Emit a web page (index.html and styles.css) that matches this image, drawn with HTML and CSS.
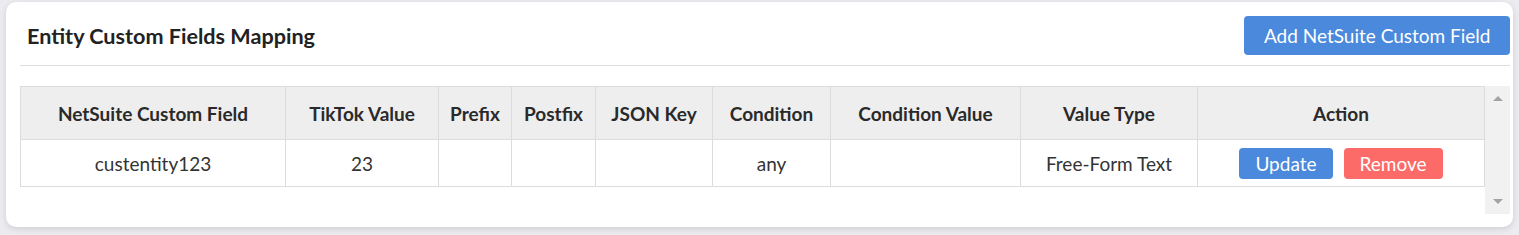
FILE: index.html
```html
<!DOCTYPE html>
<html>
<head>
<meta charset="utf-8">
<link rel="stylesheet" href="styles.css">
</head>
<body>
<div class="card">
  <div class="card-head">
    <h2 class="title">Entity Custom Fields Mapping</h2>
    <button class="btn btn-blue btn-add">Add NetSuite Custom Field</button>
  </div>
  <div class="card-body">
    <div class="scroll">
      <table class="grid">
        <colgroup>
          <col class="c1"><col class="c2"><col class="c3"><col class="c4"><col class="c5">
          <col class="c6"><col class="c7"><col class="c8"><col class="c9">
        </colgroup>
        <thead>
          <tr>
            <th>NetSuite Custom Field</th>
            <th>TikTok Value</th>
            <th>Prefix</th>
            <th>Postfix</th>
            <th>JSON Key</th>
            <th>Condition</th>
            <th>Condition Value</th>
            <th>Value Type</th>
            <th>Action</th>
          </tr>
        </thead>
        <tbody>
          <tr>
            <td>custentity123</td>
            <td>23</td>
            <td></td>
            <td></td>
            <td></td>
            <td>any</td>
            <td></td>
            <td>Free-Form Text</td>
            <td><div class="actions"><button class="btn btn-blue btn-sm">Update</button><button class="btn btn-red btn-sm">Remove</button></div></td>
          </tr>
        </tbody>
      </table>
      <div class="scrollbar"><span class="arrow up"></span><span class="arrow down"></span></div>
    </div>
  </div>
</div>
</body>
</html>
```

FILE: styles.css
```css
html, body {
  margin: 0;
  padding: 0;
}
body {
  background: #ebebf0;
  font-family: Lato, "Noto Sans", sans-serif;
  color: #333;
  height: 235px;
  overflow: hidden;
}
.card {
  margin: 2px 6px 0 6px;
  background: #fff;
  border-radius: 10px;
  box-shadow: 0 2px 6px rgba(0, 0, 0, 0.12);
  padding: 0 3px 13px 14px;
}
.card-head {
  display: flex;
  align-items: center;
  justify-content: space-between;
  padding: 14px 0 10px 0;
  border-bottom: 1px solid #dedede;
}
.title {
  margin: 0 0 0 7px;
  font-size: 21.6px;
  font-weight: 700;
  color: #222;
  line-height: 26px;
}
.btn {
  font-family: Lato, "Noto Sans", sans-serif;
  border: none;
  color: #fff;
  border-radius: 4px;
  cursor: pointer;
}
.btn-blue {
  background: #4a89dc;
}
.btn-red {
  background: #fc6b67;
}
.btn-add {
  height: 39px;
  padding: 0 19.5px;
  font-size: 19px;
}
.card-body {
  padding-top: 20px;
}
.scroll {
  display: flex;
  height: 128px;
}
.grid {
  width: 1465px;
  border-collapse: collapse;
  table-layout: fixed;
  align-self: flex-start;
}
.c1 { width: 265px; }
.c2 { width: 153px; }
.c3 { width: 73px; }
.c4 { width: 84px; }
.c5 { width: 117px; }
.c6 { width: 118px; }
.c7 { width: 190px; }
.c8 { width: 177px; }
.c9 { width: 287px; }
.grid th, .grid td {
  border: 1px solid #dcdcdc;
  text-align: center;
  font-size: 19px;
  padding: 0 4px;
  color: #333;
}
.grid th {
  background: #eeeeee;
  font-weight: 700;
  height: 52px;
  color: #2a2a2a;
}
.grid td {
  height: 46px;
}
.actions {
  display: flex;
  justify-content: center;
  gap: 11px;
}
.btn-sm {
  height: 31px;
  padding: 0 16px;
  font-size: 19px;
}
.scrollbar {
  width: 26px;
  height: 128px;
  background: #f1f1f1;
  display: flex;
  flex-direction: column;
  justify-content: space-between;
  align-items: center;
  padding: 10px 0 10px 0;
  box-sizing: border-box;
}
.arrow {
  width: 0;
  height: 0;
  border-left: 5px solid transparent;
  border-right: 5px solid transparent;
}
.arrow.up {
  border-bottom: 5px solid #a3a3a3;
}
.arrow.down {
  border-top: 5px solid #a3a3a3;
}
```
